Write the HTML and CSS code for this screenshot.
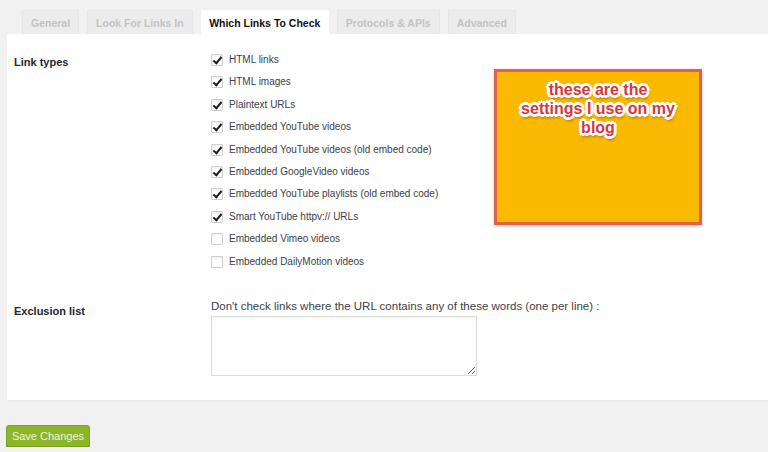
FILE: index.html
```html
<!DOCTYPE html>
<html lang="en">
<head>
    <meta charset="UTF-8">
    <meta name="viewport" content="width=device-width, initial-scale=1.0">
    <title>Link Checker Settings</title>
    <link rel="stylesheet" href="styles.css">
</head>
<body>

    <div class="tabs">
        <div class="tab">General</div>
        <div class="tab">Look For Links In</div>
        <div class="tab active">Which Links To Check</div>
        <div class="tab">Protocols &amp; APIs</div>
        <div class="tab">Advanced</div>
    </div>

    <div class="panel">
        <div class="row link-types">
            <div class="row-label">Link types</div>
            <div class="row-field">
                <label class="check"><span class="box on"></span>HTML links</label>
                <label class="check"><span class="box on"></span>HTML images</label>
                <label class="check"><span class="box on"></span>Plaintext URLs</label>
                <label class="check"><span class="box on"></span>Embedded YouTube videos</label>
                <label class="check"><span class="box on"></span>Embedded YouTube videos (old embed code)</label>
                <label class="check"><span class="box on"></span>Embedded GoogleVideo videos</label>
                <label class="check"><span class="box on"></span>Embedded YouTube playlists (old embed code)</label>
                <label class="check"><span class="box on"></span>Smart YouTube httpv:// URLs</label>
                <label class="check"><span class="box"></span>Embedded Vimeo videos</label>
                <label class="check"><span class="box"></span>Embedded DailyMotion videos</label>
            </div>
        </div>

        <div class="row exclusion">
            <div class="row-label">Exclusion list</div>
            <div class="row-field">
                <div class="hint">Don't check links where the URL contains any of these words (one per line) :</div>
                <textarea class="words"></textarea>
            </div>
        </div>

        <!-- annotation pasted over the screenshot -->
        <div class="note">
            <span>these are the<br>settings I use on my<br>blog</span>
        </div>
    </div>

    <button class="save">Save Changes</button>

</body>
</html>
```

FILE: styles.css
```css
body {
    margin: 0;
    background-color: #f1f1f1;
    font-family: "Liberation Sans", Arial, sans-serif;
    color: #32373c;
}
.tabs {
    display: flex;
    gap: 8px;
    padding: 10px 0 0 22px;
    height: 24px;
}
.tab {
    height: 24px;
    line-height: 25px;
    padding: 0 8px;
    font-size: 10.5px;
    font-weight: bold;
    color: #c3c3c3;
    background-color: #ececec;
    border: 1px solid #e6e6e6;
    border-bottom: none;
    box-sizing: border-box;
}
.tab.active {
    background-color: #fff;
    color: #111;
    border-color: #fff;
    padding: 0 7.5px;
}
.panel {
    position: relative;
    margin-left: 7px;
    height: 368px;
    background-color: #fff;
    border-bottom: 2px solid #ebebeb;
    box-sizing: border-box;
}
.row {
    display: flex;
    padding-left: 7px;
}
.row-label {
    width: 197px;
    font-size: 11px;
    font-weight: bold;
    color: #23282d;
}
.link-types {
    padding-top: 20px;
}
.link-types .row-label {
    padding-top: 2px;
}
.check {
    display: flex;
    align-items: flex-start;
    height: 22.4px;
    font-size: 10px;
    line-height: 12px;
    color: #3c4146;
}
.box {
    width: 10px;
    height: 10px;
    margin-right: 6px;
    border: 1px solid #cfcfcf;
    border-radius: 1px;
    box-shadow: inset 0 1px 2px rgba(0,0,0,0.08);
    position: relative;
    flex-shrink: 0;
}
.box.on::after {
    content: "";
    position: absolute;
    left: 3px;
    top: 0;
    width: 3px;
    height: 7px;
    border: solid #1e1e1e;
    border-width: 0 2px 2px 0;
    transform: rotate(40deg);
}
.exclusion {
    padding-top: 22px;
}
.exclusion .row-label {
    padding-top: 5px;
}
.hint {
    font-size: 11.5px;
    color: #3c4146;
    line-height: 13px;
}
.words {
    display: block;
    width: 266px;
    height: 60px;
    margin-top: 3px;
    border: 1px solid #dcdcdc;
    box-shadow: inset 0 1px 2px rgba(0,0,0,0.05);
    box-sizing: border-box;
    resize: vertical;
}
.note {
    position: absolute;
    left: 487px;
    top: 35px;
    width: 208px;
    height: 156px;
    background-color: #fbb900;
    border: 3px solid #e4604e;
    box-sizing: border-box;
    box-shadow: 0 1px 3px rgba(0,0,0,0.25);
    text-align: center;
    padding: 8px 4px 0;
}
.note span {
    display: inline-block;
    font-size: 16px;
    font-weight: bold;
    line-height: 19px;
    color: #d4383d;
    text-shadow:
        2px 0 0 #fff, -2px 0 0 #fff, 0 2px 0 #fff, 0 -2px 0 #fff,
        2px 2px 0 #fff, -2px -2px 0 #fff, 2px -2px 0 #fff, -2px 2px 0 #fff,
        3px 0 0 #fff, -3px 0 0 #fff, 0 3px 0 #fff, 0 -3px 0 #fff,
        1px 4px 3px rgba(0,0,0,0.45);
}
.save {
    display: block;
    margin: 23px 0 0 6px;
    width: 84px;
    height: 22px;
    padding: 0;
    font-family: "Liberation Sans", Arial, sans-serif;
    font-size: 11px;
    color: #eef5d8;
    background-color: #8cb52a;
    border: 1px solid #7da326;
    border-radius: 3px;
    box-shadow: 0 1px 0 #6f8f20;
}
```
